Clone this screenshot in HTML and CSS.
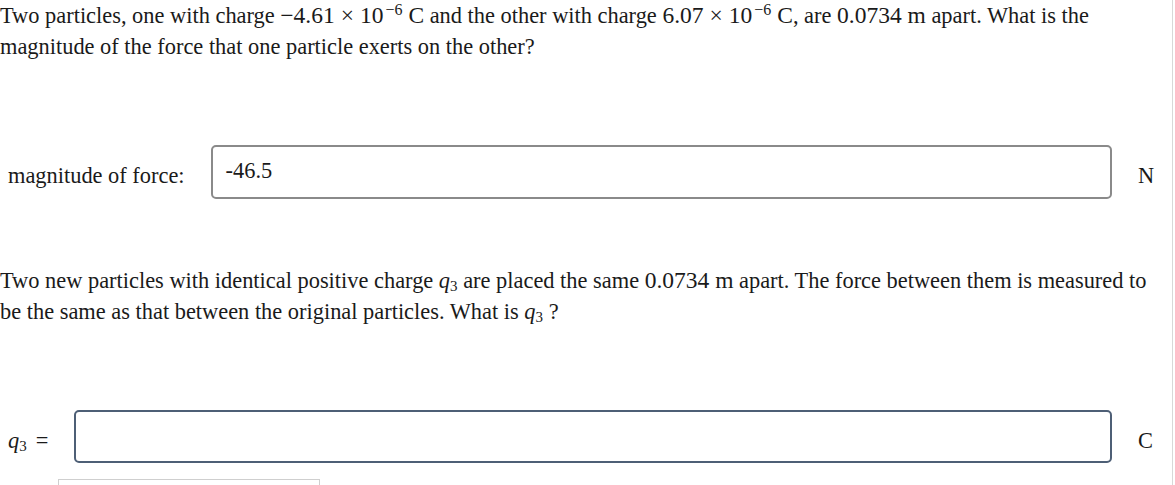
FILE: index.html
```html
<!DOCTYPE html>
<html>
<head>
<meta charset="utf-8">
<link rel="stylesheet" href="styles.css">
</head>
<body>
<div class="page">
  <p class="question">Two particles, one with charge <span class="m">−4.61<span class="op">×</span>10<sup>−6</sup> C</span> and the other with charge <span class="m">6.07<span class="op">×</span>10<sup>−6</sup> C</span>, are <span class="m">0.0734 m</span> apart. What is the magnitude of the force that one particle exerts on the other?</p>
  <div class="row row-first">
    <label class="label">magnitude of force:</label>
    <div class="field field-gray">-46.5</div>
    <span class="unit">N</span>
  </div>
  <p class="question q2">Two new particles with identical positive charge <span class="var">q<sub>3</sub></span> are placed the same <span class="m">0.0734 m</span> apart. The force between them is measured to be the same as that between the original particles. What is <span class="var">q<sub>3</sub></span> ?</p>
  <div class="row row-second">
    <label class="label"><span class="var">q<sub>3</sub></span><span class="eq">=</span></label>
    <div class="field field-dark"></div>
    <span class="unit">C</span>
  </div>
  <div class="below"></div>
</div>
</body>
</html>
```
FILE: styles.css
```css
html, body {
  margin: 0;
  padding: 0;
  background: #fff;
}
body {
  font-family: "Liberation Serif", "Times New Roman", serif;
  font-size: 22.4px;
  color: #1a1a1a;
  overflow: hidden;
}
.page {
  width: 1172px;
  height: 485px;
  border-right: 1px solid #d8d8d8;
  box-sizing: content-box;
}
.question {
  margin: 0;
  line-height: 31px;
  padding-right: 15px;
}
.m {
  white-space: nowrap;
  font-size: 23.5px;
}
.op {
  margin: 0 6px;
}
.question sup {
  font-size: 16px;
  vertical-align: 8px;
  line-height: 0;
  margin-left: 2px;
}
.var {
  font-style: italic;
}
.var sub {
  font-style: normal;
  font-size: 15px;
  vertical-align: -3px;
  line-height: 0;
}
.row {
  display: grid;
  grid-template-columns: auto 1fr 34px;
  column-gap: 26px;
  align-items: center;
  padding-left: 8px;
}
.row-first {
  margin-top: 83px;
}
.q2 {
  margin-top: 66px;
}
.row-second {
  margin-top: 83px;
}
.label,
.unit {
  white-space: nowrap;
  padding-top: 8px;
}
.eq {
  margin-left: 9px;
}
.field {
  height: 54px;
  box-sizing: border-box;
  border-radius: 5px;
  padding: 13px 13px 0;
  line-height: 22px;
}
.field-gray {
  border: 2px solid #8a8a8a;
}
.field-dark {
  height: 53px;
  border: 2px solid #4e5f76;
}
.unit {
  text-align: left;
}
.below {
  margin: 16px 0 0 58px;
  width: 262px;
  height: 20px;
  border: 1px solid #cfcfcf;
  border-bottom: none;
  box-sizing: border-box;
}
```
